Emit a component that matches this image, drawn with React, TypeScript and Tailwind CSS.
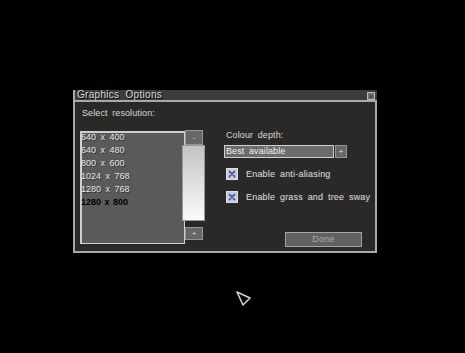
function Check() {
  return (
    <div className="w-[12px] h-[12px] bg-[#c3c6d3] border border-[#e0e0e0] flex items-center justify-center">
      <svg width="8" height="8" viewBox="0 0 8 8">
        <path d="M1.5 1.5 L6.5 6.5 M6.5 1.5 L1.5 6.5" stroke="#2536a8" strokeWidth="1.4" strokeLinecap="round" />
      </svg>
    </div>
  );
}

export default function App() {
  const items = ["640 x 400", "640 x 480", "800 x 600", "1024 x 768", "1280 x 768"];
  return (
    <div className="relative w-[465px] h-[353px] bg-black overflow-hidden pt-[90px] pl-[73px] font-['Liberation_Sans',Arial,sans-serif]">
      <div className="w-[304px] h-[163px] flex flex-col">
        <div className="h-[10px] bg-[#3c3c3c] flex items-start justify-between pl-[2px] pr-[2px] border-l-2 border-[#a8a8a8]">
          <span className="text-[10px] leading-[10px] text-[#dadada] tracking-[0.3px] [word-spacing:3px] [text-shadow:1px_1px_0_#000]">Graphics Options</span>
          <div className="mt-[2px] w-[8px] h-[8px] bg-[#707070] border border-[#b8b8b8] flex items-center justify-center text-[7px] leading-none text-[#222]">×</div>
        </div>
        <div className="flex-1 border-2 border-[#a8a8a8] bg-[#2a2928] flex flex-col">
          <div className="ml-[7px] mt-[6px] text-[9px] leading-[10px] text-[#d8d8d8] tracking-[0.1px] [word-spacing:2px] whitespace-nowrap">Select resolution:</div>
          <div className="mt-[13px] ml-[5px] flex">
            <div className="flex">
              <div className="w-[105px] h-[113px] bg-[#5a5a5a] border-t-2 border-l-2 border-r border-b border-[#cfcfcf] flex flex-col">
                {items.map((t) => (
                  <div key={t} className="h-[13px] leading-[9px] text-[9px] text-[#e6e6e6] [word-spacing:2px] [text-shadow:1px_1px_0_#333] -ml-[1px] whitespace-nowrap">{t}</div>
                ))}
                <div className="h-[13px] leading-[9px] text-[9px] font-bold text-black [word-spacing:1px] -ml-[1px] whitespace-nowrap">1280 x 800</div>
              </div>
              <div className="flex flex-col w-[20px] -mt-[1px]">
                <div className="w-[18px] h-[15px] bg-[#676767] border border-[#959595] flex items-center justify-center text-[8px] leading-none text-[#cfcfcf]">-</div>
                <div className="-ml-[3px] w-[23px] h-[76px] bg-gradient-to-b from-[#c4c4c4] to-[#fbfbfb] border border-[#9a9a9a]"></div>
                <div className="mt-[6px] w-[18px] h-[13px] bg-[#676767] border border-[#959595] flex items-center justify-center text-[8px] leading-none text-[#dcdcdc]">+</div>
              </div>
            </div>
            <div className="ml-[19px] flex flex-col">
              <div className="ml-[2px] text-[9px] leading-[9px] text-[#d8d8d8] tracking-[0.1px] [word-spacing:2px] whitespace-nowrap">Colour depth:</div>
              <div className="mt-[5px] flex">
                <div className="w-[110px] h-[13px] bg-[#6c6c6c] border border-[#d0d0d0] pl-[1px] text-[9px] leading-[11px] text-[#f2f2f2] tracking-[0.1px] [word-spacing:2px] whitespace-nowrap">Best available</div>
                <div className="ml-[1px] w-[12px] h-[13px] bg-[#676767] border border-[#959595] flex items-center justify-center text-[8px] leading-none text-[#dcdcdc]">+</div>
              </div>
              <div className="mt-[10px] ml-[2px] flex items-center">
                <Check />
                <span className="ml-[8px] text-[9px] leading-[10px] text-[#e0e0e0] tracking-[0.2px] [word-spacing:2px] whitespace-nowrap">Enable anti-aliasing</span>
              </div>
              <div className="mt-[11px] ml-[2px] flex items-center">
                <Check />
                <span className="ml-[8px] text-[9px] leading-[10px] text-[#e0e0e0] tracking-[0.2px] [word-spacing:2px] whitespace-nowrap">Enable grass and tree sway</span>
              </div>
              <div className="mt-[29px] ml-[61px] w-[77px] h-[15px] bg-[#616161] border border-[#a4a4a4] flex items-center justify-center text-[9px] leading-none text-[#aaaaaa] tracking-[0.3px]">Done</div>
            </div>
          </div>
        </div>
      </div>
      <svg className="absolute left-[235px] top-[290px]" width="18" height="18" viewBox="0 0 18 18">
        <polygon points="2,2 15,8 8,15" fill="none" stroke="#cfcfcf" strokeWidth="1.6" strokeLinejoin="round" />
      </svg>
    </div>
  );
}
